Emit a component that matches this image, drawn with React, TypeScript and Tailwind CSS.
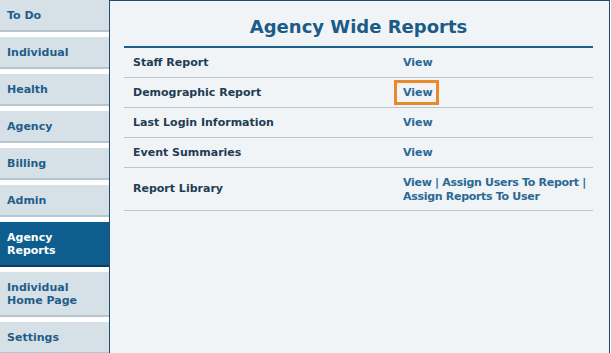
import React from "react";

const tabs = [
  { label: ["To Do"] },
  { label: ["Individual"] },
  { label: ["Health"] },
  { label: ["Agency"] },
  { label: ["Billing"] },
  { label: ["Admin"] },
  { label: ["Agency", "Reports"], active: true },
  { label: ["Individual", "Home Page"] },
  { label: ["Settings"] },
];

const reports = [
  { name: "Staff Report" },
  { name: "Demographic Report", highlight: true },
  { name: "Last Login Information" },
  { name: "Event Summaries" },
  { name: "Report Library", library: true },
];

function SideTab({ label, active }: { label: string[]; active?: boolean }) {
  const tall = label.length > 1;
  return (
    <div
      className={`flex flex-col justify-center pl-[7px] border-b-2 mb-[5px] text-[11px] leading-[13px] font-bold ${
        tall ? "h-[45px] pt-[1px]" : "h-[32px]"
      } ${
        active
          ? "bg-[#0d5d8f] border-[#0a3d5f] text-white"
          : "bg-[#d6e0e7] border-[#b7c5cf] text-[#235d8a]"
      }`}
    >
      {label.map((l) => (
        <span key={l}>{l}</span>
      ))}
    </div>
  );
}

export default function App() {
  return (
    <div
      className="flex w-[611px] h-[353px] overflow-hidden bg-white"
      style={{ fontFamily: '"DejaVu Sans", Verdana, sans-serif' }}
    >
      <div className="w-[109px] shrink-0">
        {tabs.map((t) => (
          <SideTab key={t.label.join(" ")} label={t.label} active={t.active} />
        ))}
      </div>

      <div className="w-[501px] h-[353px] shrink-0 bg-[#f0f4f7] border border-b-0 border-[#1f4e6e] pl-[14px] pr-[16px] pt-[14px]">
        <h1 className="text-center text-[18px] leading-[24px] font-bold text-[#1c5b87]">
          Agency Wide Reports
        </h1>
        <div className="mt-[7px] border-t-2 border-[#1c5f8d]">
          {reports.map((r) => (
            <div
              key={r.name}
              className={`grid grid-cols-[270px_1fr] items-center border-b border-[#b9c5cf] text-[11px] leading-[14px] font-bold ${
                r.library ? "h-[43px]" : "h-[30px]"
              }`}
            >
              <div className="pl-[9px] text-[#1f3c53]">{r.name}</div>
              <div className="pl-[9px] text-[#2b6994]">
                {r.library ? (
                  <div className="pt-[1px] tracking-[-0.3px]">
                    <span className="block whitespace-nowrap">View | Assign Users To Report |</span>
                    <span className="block whitespace-nowrap">Assign Reports To User</span>
                  </div>
                ) : r.highlight ? (
                  <span className="relative">
                    View
                    <span className="absolute -left-[9px] -right-[6px] -top-[6px] -bottom-[6px] border-[3px] border-[#e8892b]" />
                  </span>
                ) : (
                  "View"
                )}
              </div>
            </div>
          ))}
        </div>
      </div>
    </div>
  );
}
